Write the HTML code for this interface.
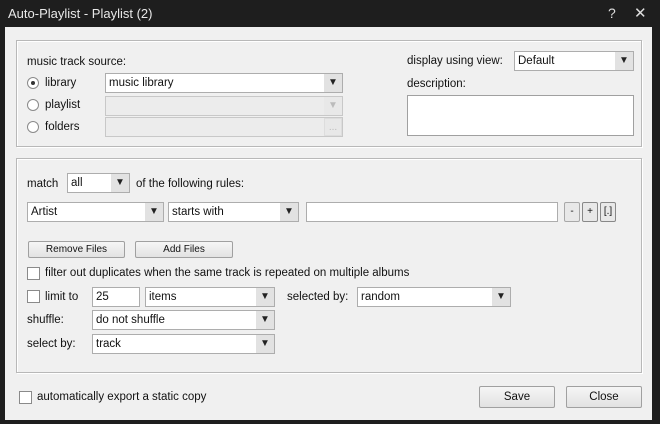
<!DOCTYPE html>
<html><head><meta charset="utf-8"><style>
*{box-sizing:border-box;margin:0;padding:0}
body{width:660px;height:424px;background:#1e1e1e;font-family:"Liberation Sans",sans-serif;font-size:11.5px;color:#111;position:relative;overflow:hidden}
.a{position:absolute}
.t{margin-top:1px}
.title{left:8px;top:6px;color:#e8e8e8;font-size:13px}
.win{left:5px;top:27px;width:647px;height:393px;background:#f0f0f0}
.grp{border:1px solid #b8b8b8;box-shadow:inset 1px 1px 0 #fff,1px 1px 0 #fff}
.dd{background:#fff;border:1px solid #adadad;padding-left:3px;line-height:18px;white-space:nowrap;overflow:hidden}
.dd .ar{position:absolute;right:0;top:0;width:18px;height:100%;background:#e2e2e2;font-size:10px;text-align:center;color:#222;line-height:18px}
.dis{background:#ececec;border-color:#c8c8c8}
.dis .ar{color:#bbb;background:#e8e8e8}
.rad{width:12px;height:12px;border:1px solid #8a8a8a;border-radius:50%;background:#fff}
.chk{width:13px;height:13px;border:1px solid #8a8a8a;background:#fff}
.btn{border:1px solid #a0a0a0;border-radius:2px;background:linear-gradient(#f6f6f6,#e2e2e2);text-align:center}
.sb{border:1px solid #a8a8a8;border-radius:2px;background:#e8e8e8;text-align:center;font-size:10px;line-height:18px}
</style></head><body>
<div class="a title">Auto-Playlist - Playlist (2)</div>
<div class="a" style="left:608px;top:5px;color:#ddd;font-size:14px">?</div>
<div class="a" style="left:634px;top:4px;color:#ddd;font-size:15px">✕</div>
<div class="a win"></div>

<div class="a grp" style="left:16px;top:40px;width:626px;height:107px"></div>
<div class="a grp" style="left:16px;top:158px;width:626px;height:215px"></div>

<div class="a t" style="left:27px;top:55px">music track source:</div>
<div class="a rad" style="left:27px;top:77px"><div style="width:4px;height:4px;border-radius:50%;background:#333;margin:3px"></div></div>
<div class="a t" style="left:45px;top:76px">library</div>
<div class="a rad" style="left:27px;top:99px"></div>
<div class="a t" style="left:45px;top:98px">playlist</div>
<div class="a rad" style="left:27px;top:121px"></div>
<div class="a t" style="left:45px;top:120px">folders</div>
<div class="a dd" style="left:105px;top:73px;width:238px;height:20px">music library<div class="ar">▼</div></div>
<div class="a dd dis" style="left:105px;top:96px;width:238px;height:20px"><div class="ar">▼</div></div>
<div class="a dd dis" style="left:105px;top:117px;width:238px;height:20px"><div class="ar" style="border:1px solid #ddd">...</div></div>

<div class="a t" style="left:407px;top:54px">display using view:</div>
<div class="a dd" style="left:514px;top:51px;width:120px;height:20px">Default<div class="ar">▼</div></div>
<div class="a t" style="left:407px;top:77px">description:</div>
<div class="a dd" style="left:407px;top:95px;width:227px;height:41px;border-color:#a0a0a0"></div>

<div class="a t" style="left:27px;top:177px">match</div>
<div class="a dd" style="left:67px;top:173px;width:63px;height:20px">all<div class="ar">▼</div></div>
<div class="a t" style="left:136px;top:177px">of the following rules:</div>
<div class="a dd" style="left:27px;top:202px;width:137px;height:20px">Artist<div class="ar">▼</div></div>
<div class="a dd" style="left:168px;top:202px;width:131px;height:20px">starts with<div class="ar">▼</div></div>
<div class="a dd" style="left:306px;top:202px;width:252px;height:20px"></div>
<div class="a sb" style="left:564px;top:202px;width:16px;height:20px">-</div>
<div class="a sb" style="left:582px;top:202px;width:16px;height:20px;border-color:#888">+</div>
<div class="a sb" style="left:600px;top:202px;width:16px;height:20px;border-color:#888">[.]</div>

<div class="a btn" style="left:28px;top:241px;width:97px;height:17px;font-size:10px;line-height:15px">Remove Files</div>
<div class="a btn" style="left:135px;top:241px;width:98px;height:17px;font-size:10px;line-height:15px">Add Files</div>

<div class="a chk" style="left:27px;top:267px"></div>
<div class="a t" style="left:45px;top:266px">filter out duplicates when the same track is repeated on multiple albums</div>
<div class="a chk" style="left:27px;top:290px"></div>
<div class="a t" style="left:45px;top:290px">limit to</div>
<div class="a dd" style="left:92px;top:287px;width:48px;height:20px">25</div>
<div class="a dd" style="left:145px;top:287px;width:130px;height:20px">items<div class="ar">▼</div></div>
<div class="a t" style="left:287px;top:290px">selected by:</div>
<div class="a dd" style="left:357px;top:287px;width:154px;height:20px">random<div class="ar">▼</div></div>
<div class="a t" style="left:27px;top:313px">shuffle:</div>
<div class="a dd" style="left:92px;top:310px;width:183px;height:20px">do not shuffle<div class="ar">▼</div></div>
<div class="a t" style="left:27px;top:337px">select by:</div>
<div class="a dd" style="left:92px;top:334px;width:183px;height:20px">track<div class="ar">▼</div></div>

<div class="a chk" style="left:19px;top:391px"></div>
<div class="a t" style="left:37px;top:390px">automatically export a static copy</div>
<div class="a btn" style="left:479px;top:386px;width:76px;height:22px;line-height:20px">Save</div>
<div class="a btn" style="left:566px;top:386px;width:76px;height:22px;line-height:20px">Close</div>
</body></html>
